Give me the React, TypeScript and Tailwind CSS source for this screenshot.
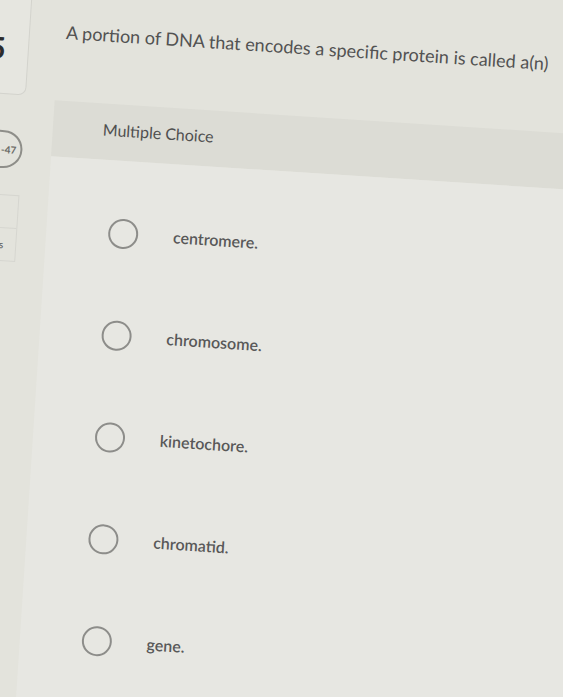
export default function App() {
  const options = ["centromere.", "chromosome.", "kinetochore.", "chromatid.", "gene."];
  return (
    <div className="w-[563px] h-[697px] overflow-hidden bg-[#e3e3dc] font-['Lato',sans-serif]">
      <div className="w-[820px] h-[920px] -ml-[100px] -mt-[100px] rotate-[3.7deg] origin-[223px_337px] flex">
        {/* sidebar */}
        <div className="w-[117px] shrink-0 flex flex-col items-end">
          <div className="w-[110px] h-[202px] border border-[#d3d3cd] rounded-br-lg bg-[#e6e6e0] flex items-start justify-end pt-[139px] pr-[22px]">
            <span className="text-[30px] font-bold text-[#2c2c2c] leading-none">5</span>
          </div>
          <div className="mt-[36px] h-[38px] w-[70px] rounded-full border-2 border-[#8e8e89] flex items-center justify-end pr-[4px]">
            <span className="text-[10px] font-bold text-[#6a6a66]">-47</span>
          </div>
          <div className="mt-[26px] w-[80px] h-[67px] border border-[#d6d6d0] flex flex-col">
            <div className="h-[33px] border-b border-[#d6d6d0]" />
            <div className="flex-1 flex items-center justify-end pr-[12px] text-[10px] text-[#555]">s</div>
          </div>
        </div>
        {/* main */}
        <div className="ml-[29px] flex-1 flex flex-col">
          <div className="pt-[124px] pl-[7px] text-[18px] leading-[24px] text-[#525252] whitespace-nowrap">
            A portion of DNA that encodes a specific protein is called a(n)
          </div>
          <div className="mt-[57px] flex flex-col">
            <div className="h-[56px] bg-[#dcdcd5] pl-[50px] pt-[14px]">
              <span className="text-[16px] leading-[20px] text-[#505050]">Multiple Choice</span>
            </div>
            <div className="bg-[#e7e7e2] pt-[22px] pb-[16px] flex flex-col">
              {options.map((o) => (
                <div key={o} className="h-[102px] flex items-center pl-[62px]">
                  <div className="w-[30px] h-[30px] rounded-full border-2 border-[#8d8d8a] shrink-0" />
                  <span className="ml-[35px] text-[16px] text-[#585858] font-semibold">{o}</span>
                </div>
              ))}
            </div>
          </div>
        </div>
      </div>
    </div>
  );
}
